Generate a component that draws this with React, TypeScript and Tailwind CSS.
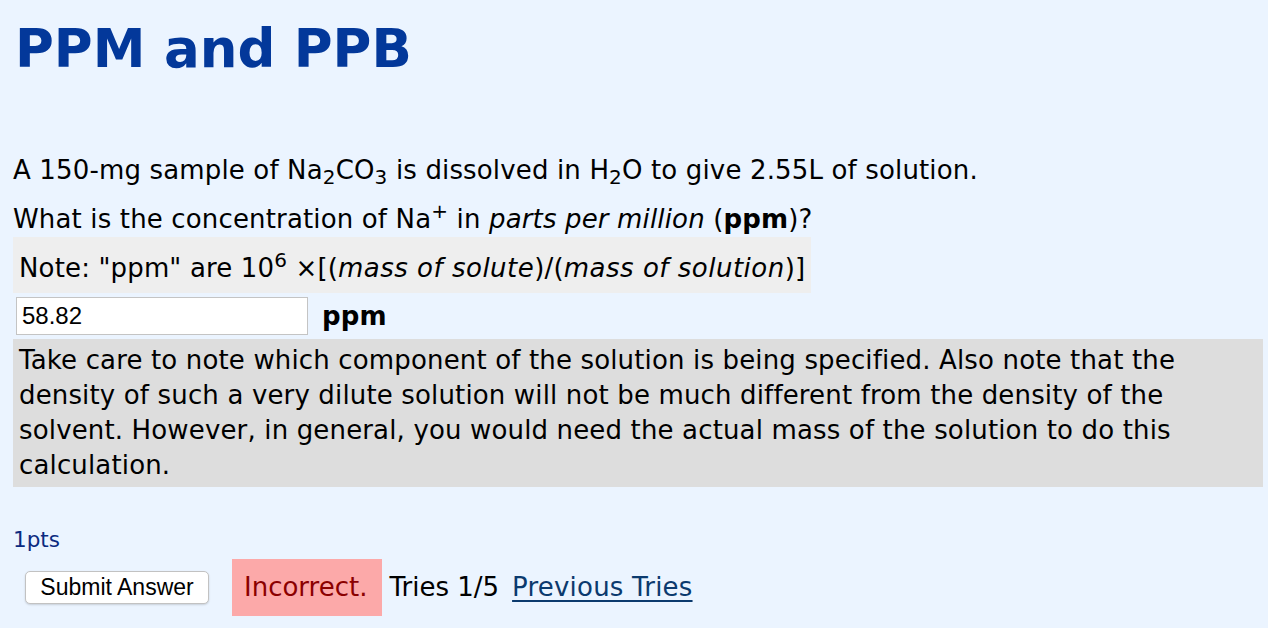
export default function App() {
  const verdana = "font-['DejaVu_Sans','Verdana',sans-serif]";
  return (
    <div className={`min-h-screen w-full bg-[#ebf4ff] text-black ${verdana}`}>
      <div className="pl-[13px] pr-[5px] pt-[14px]">
        <h1 className="text-[53px] leading-[70px] font-bold text-[#03389a] pl-[2px]">PPM and PPB</h1>

        <div className="mt-[70px] text-[26px] leading-[32px] tracking-[0.15px]">
          <p>
            A 150-mg sample of Na<sub className="text-[20px]">2</sub>CO<sub className="text-[20px]">3</sub> is dissolved in H
            <sub className="text-[20px]">2</sub>O to give 2.55L of solution.
          </p>
          <p className="mt-[17px]">
            What is the concentration of Na<sup className="text-[20px]">+</sup> in <i>parts per million</i> (<b>ppm</b>)?
          </p>
          <div className="mt-[2px] inline-block bg-[#eeeeee] px-[6px] pt-[15px] pb-[9px]">
            Note: "ppm" are 10<sup className="text-[20px]">6</sup> ×[(<i className="tracking-[0.5px]">mass of solute</i>)/(
            <i className="tracking-[0.5px]">mass of solution</i>)]
          </div>
          <div className="mt-[4px] flex items-center gap-[14px] pl-[3px]">
            <input
              readOnly
              value="58.82"
              className="h-[38px] w-[292px] bg-white border border-[#c4c4c4] px-[5px] text-[24px] tracking-normal font-['Liberation_Sans',Arial,sans-serif] outline-none"
            />
            <b>ppm</b>
          </div>
          <div className="mt-[4px] bg-[#dddddd] px-[6px] pt-[4px] pb-[4px] leading-[35px]">
            Take care to note which component of the solution is being specified. Also note that the density of such a
            very dilute solution will not be much different from the density of the solvent. However, in general, you
            would need the actual mass of the solution to do this calculation.
          </div>
        </div>

        <div className="mt-[39px] text-[21.5px] leading-[28px] text-[#0b2a80]">1pts</div>

        <div className="mt-[5px] flex items-center">
          <button className="ml-[12px] h-[33px] w-[184px] rounded-[5px] border border-[#c2c2c2] bg-white text-[23px] leading-none font-['Liberation_Sans',Arial,sans-serif] shadow-[0_1px_2px_rgba(0,0,0,0.15)]">
            Submit Answer
          </button>
          <span className="ml-[23px] bg-[#fca9a9] pl-[12px] pr-[15px] h-[57px] flex items-center text-[26px] text-[#8b0000]">
            Incorrect.
          </span>
          <span className="ml-[7px] text-[26px]">Tries 1/5</span>
          <a href="#" className="ml-[13px] text-[26px] tracking-[0.2px] text-[#0b3a6e] underline underline-offset-[4px]">
            Previous Tries
          </a>
        </div>
      </div>
    </div>
  );
}
